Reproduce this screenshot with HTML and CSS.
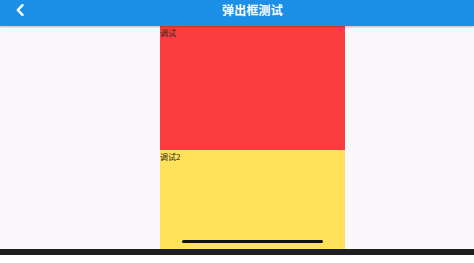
FILE: index.html
```html
<!DOCTYPE html>
<html lang="zh">
<head>
<meta charset="utf-8">
<link rel="stylesheet" href="styles.css">
</head>
<body>
<div class="screen">
  <header class="appbar">
    <span class="back">
      <svg width="10" height="12" viewBox="0 0 10 12"><path d="M7.5 1.2 L2.8 6 L7.5 10.8" fill="none" stroke="#fff" stroke-width="2.4" stroke-linecap="round" stroke-linejoin="round"/></svg>
    </span>
    <h1 class="title">弹出框测试</h1>
  </header>
  <main class="content">
    <div class="column">
      <div class="box box-red"><span class="label">调试</span></div>
      <div class="box box-yellow"><span class="label">调试2</span></div>
    </div>
    <div class="home-indicator"></div>
  </main>
  <div class="navbar"></div>
  <div class="footer"></div>
</div>
</body>
</html>
```
FILE: styles.css
```css
html, body {
  margin: 0;
  padding: 0;
  background: #ffffff;
}
.screen {
  width: 474px;
  height: 263px;
  display: flex;
  flex-direction: column;
  font-family: "Noto Sans CJK SC", "Noto Sans", sans-serif;
  background: #faf8fb;
  overflow: hidden;
}
.appbar {
  height: 26px;
  flex: 0 0 26px;
  background: #1c8fe7;
  display: flex;
  align-items: center;
  position: relative;
  z-index: 2;
  box-shadow: 0 1px 2px rgba(0,0,0,0.25);
}
.back {
  width: 10px;
  height: 12px;
  margin-left: 15px;
  margin-top: -6px;
  display: flex;
}
.title {
  margin: 0 0 0 197px;
  margin-top: -6px;
  font-size: 12px;
  font-weight: 700;
  color: #ffffff;
  line-height: 14px;
  letter-spacing: 0.2px;
}
.content {
  flex: 1;
  position: relative;
  display: flex;
  justify-content: flex-start;
}
.column {
  margin-left: 160px;
  width: 185px;
  display: flex;
  flex-direction: column;
}
.box {
  display: block;
}
.box-red {
  height: 124px;
  background: #fc3d3f;
}
.box-yellow {
  flex: 1;
  background: #ffe15a;
}
.label {
  display: block;
  font-size: 8px;
  line-height: 12px;
  padding-top: 1px;
  color: #2a2320;
}
.home-indicator {
  position: absolute;
  left: 182px;
  width: 141px;
  bottom: 6px;
  height: 3px;
  border-radius: 2px;
  background: #111111;
}
.navbar {
  flex: 0 0 6px;
  background: #1e1e1e;
}
.footer {
  flex: 0 0 8px;
  background: #ffffff;
}
```
